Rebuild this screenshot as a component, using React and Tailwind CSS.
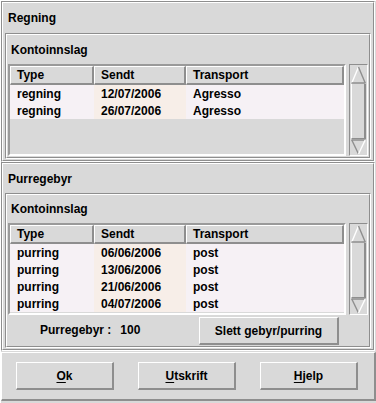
import React from "react";

const G = "border-[#8e8e8e]";

function Etched({ className = "", innerClassName = "", children }) {
  return (
    <div className={`border border-t-[#8e8e8e] border-l-[#8e8e8e] border-b-white border-r-white ${className}`}>
      <div className={`h-full border border-t-white border-l-white border-b-[#8e8e8e] border-r-[#8e8e8e] ${innerClassName}`}>
        {children}
      </div>
    </div>
  );
}

function UpArrow() {
  return (
    <svg width="15" height="18" viewBox="0 0 15 18" className="block">
      <line x1="0.8" y1="17" x2="7.5" y2="1" stroke="#ffffff" strokeWidth="1.4" />
      <line x1="7.5" y1="1" x2="14.2" y2="17" stroke="#8e8e8e" strokeWidth="1.4" />
      <line x1="0.5" y1="17" x2="14.5" y2="17" stroke="#8e8e8e" strokeWidth="1.5" />
    </svg>
  );
}

function DownArrow() {
  return (
    <svg width="15" height="16" viewBox="0 0 15 16" className="block">
      <line x1="0.5" y1="1" x2="14.5" y2="1" stroke="#8e8e8e" strokeWidth="1.5" />
      <line x1="0.8" y1="1" x2="7.5" y2="15" stroke="#8e8e8e" strokeWidth="1.4" />
      <line x1="7.5" y1="15" x2="14.2" y2="1" stroke="#ffffff" strokeWidth="1.4" />
    </svg>
  );
}

function Scrollbar() {
  return (
    <div className="w-[19px] h-[92px] border border-t-[#8e8e8e] border-l-[#8e8e8e] border-b-white border-r-white flex flex-col items-center pt-[1px]">
      <UpArrow />
      <div className="w-[15px] flex-1 border-l border-l-white border-r-2 border-r-[#8e8e8e] border-b border-b-[#8e8e8e]"></div>
      <DownArrow />
    </div>
  );
}

function HeaderCell({ w, children }) {
  return (
    <div className={`${w} h-[19px] border-t border-l border-t-white border-l-white border-b-2 border-r-2 border-b-[#8e8e8e] border-r-[#8e8e8e] flex items-center pl-[6px]`}>
      {children}
    </div>
  );
}

function Listbox({ rows }) {
  return (
    <div className="flex h-[92px]">
      <div className="ml-[1px] w-[338px] h-[92px] border-t-2 border-l-2 border-t-[#9a9a9a] border-l-[#9a9a9a] border-b-2 border-r-2 border-b-white border-r-white flex flex-col">
        <div className="flex">
          <HeaderCell w="w-[84px]">Type</HeaderCell>
          <HeaderCell w="w-[92px]">Sendt</HeaderCell>
          <HeaderCell w="flex-1">Transport</HeaderCell>
        </div>
        {rows.map((r, i) => (
          <div key={i} className="flex h-[17px] items-center">
            <div className="w-[84px] h-full bg-[#f6f1f5] pl-[7px] flex items-center">{r[0]}</div>
            <div className="w-[92px] h-full bg-[#f7eee8] pl-[7px] flex items-center">{r[1]}</div>
            <div className="flex-1 h-full bg-[#f6f1f5] pl-[7px] flex items-center">{r[2]}</div>
          </div>
        ))}
      </div>
      <div className="ml-[3px]">
        <Scrollbar />
      </div>
    </div>
  );
}

function Button({ className = "", children }) {
  return (
    <div className={`h-[28px] border-t border-l border-t-white border-l-white border-b-2 border-r-2 border-b-[#8e8e8e] border-r-[#8e8e8e] flex items-center justify-center ${className}`}>
      {children}
    </div>
  );
}

export default function App() {
  return (
    <div
      className="w-[376px] h-[403px] bg-[#d9d9d9] border-t border-l border-white text-black text-[12px] font-bold leading-none overflow-hidden"
      style={{ fontFamily: '"Liberation Sans", Arial, sans-serif' }}
    >
      {/* Regning */}
      <Etched className="w-[374px] h-[161px]" innerClassName="flex flex-col">
        <div className="h-[30px] flex items-center pl-[5px]">Regning</div>
        <Etched className="ml-[2px] w-[366px] h-[126px]" innerClassName="flex flex-col">
          <div className="h-[29px] flex items-center pl-[4px]">Kontoinnslag</div>
          <Listbox
            rows={[
              ["regning", "12/07/2006", "Agresso"],
              ["regning", "26/07/2006", "Agresso"],
            ]}
          />
        </Etched>
      </Etched>

      {/* Purregebyr */}
      <Etched className="w-[374px] h-[189px]" innerClassName="flex flex-col">
        <div className="h-[29px] flex items-center pl-[5px]">Purregebyr</div>
        <Etched className="ml-[2px] w-[366px] h-[155px]" innerClassName="flex flex-col">
          <div className="h-[28px] flex items-center pl-[4px]">Kontoinnslag</div>
          <Listbox
            rows={[
              ["purring", "06/06/2006", "post"],
              ["purring", "13/06/2006", "post"],
              ["purring", "21/06/2006", "post"],
              ["purring", "04/07/2006", "post"],
            ]}
          />
          <div className="flex items-start h-[31px]">
            <div className="w-[192px] h-[30px] flex items-center pl-[33px]">
              <span>Purregebyr :</span>
              <span className="ml-[9px]">100</span>
            </div>
            <Button className="mt-[2px] w-[140px]">Slett gebyr/purring</Button>
          </div>
        </Etched>
      </Etched>

      {/* Button bar */}
      <div className="mt-[1px] w-[375px] h-[49px] border-t border-l border-t-white border-l-white border-b-2 border-r-2 border-b-[#8e8e8e] border-r-[#8e8e8e] flex items-start pl-[14px] pt-[9px] gap-[24px]">
        <Button className="w-[98px]">
          <span><span className="underline underline-offset-2">O</span>k</span>
        </Button>
        <Button className="w-[98px]">
          <span><span className="underline underline-offset-2">U</span>tskrift</span>
        </Button>
        <Button className="w-[98px]">
          <span><span className="underline underline-offset-2">H</span>jelp</span>
        </Button>
      </div>
    </div>
  );
}
